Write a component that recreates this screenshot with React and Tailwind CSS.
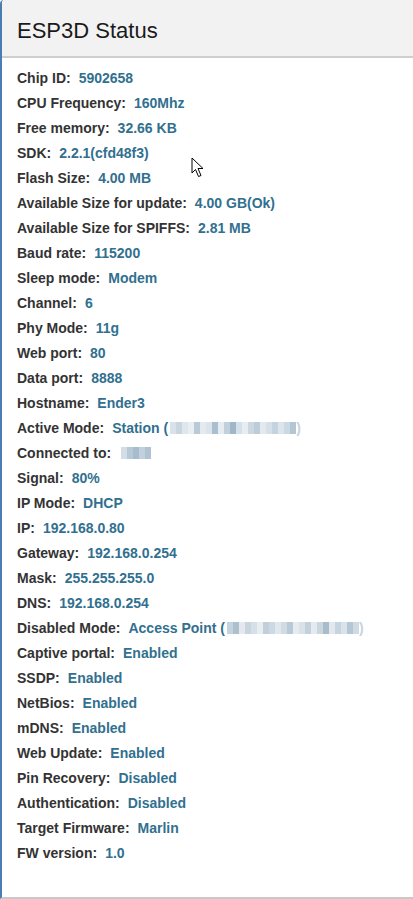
import React from 'react';

const Blur = ({ cells }) => (
  <span className="inline-flex align-middle h-[12px] ml-[2px] mb-[2px] blur-[0.6px]">
    {cells.map((c, i) => (
      <span key={i} className="h-full w-[6px]" style={{ backgroundColor: c }}></span>
    ))}
  </span>
);

const stationCells = ['#d9e2ea', '#c9d6e0', '#dfe7ee', '#e9eef2', '#b9cad7', '#e4eaef', '#dbe4eb', '#a9bfd0', '#e6ecf0', '#c0d0dc', '#9fb7c9', '#d5e0e8', '#e8edf1', '#cbd8e2', '#bccdd9', '#e3e9ee', '#d6e0e8', '#c4d3de', '#dde5ec', '#ccd9e3', '#b3c6d4'];
const apCells = ['#c5d3de', '#aebfcd', '#e3e9ee', '#c8d5df', '#d6e0e8', '#e8edf1', '#bfcfdb', '#ccd9e3', '#e0e7ed', '#d0dbe4', '#b8cad7', '#e5ebef', '#d9e2e9', '#c2d1dc', '#e4eaef', '#cad7e1', '#a9bccc', '#e2e8ed', '#c6d4df', '#dbe3ea', '#b5c7d5', '#cfdae3'];
const connCells = ['#d3dde6', '#b7c8d6', '#a7bccc', '#c1d0dc', '#b0c3d2'];

const rows = [
  ['Chip ID:', '5902658'],
  ['CPU Frequency:', '160Mhz'],
  ['Free memory:', '32.66 KB'],
  ['SDK:', '2.2.1(cfd48f3)'],
  ['Flash Size:', '4.00 MB'],
  ['Available Size for update:', '4.00 GB(Ok)'],
  ['Available Size for SPIFFS:', '2.81 MB'],
  ['Baud rate:', '115200'],
  ['Sleep mode:', 'Modem'],
  ['Channel:', '6'],
  ['Phy Mode:', '11g'],
  ['Web port:', '80'],
  ['Data port:', '8888'],
  ['Hostname:', 'Ender3'],
  ['Active Mode:', <>Station (<Blur cells={stationCells} /><span className="text-[#c5d3de]">)</span></>],
  ['Connected to:', <Blur cells={connCells} />],
  ['Signal:', '80%'],
  ['IP Mode:', 'DHCP'],
  ['IP:', '192.168.0.80'],
  ['Gateway:', '192.168.0.254'],
  ['Mask:', '255.255.255.0'],
  ['DNS:', '192.168.0.254'],
  ['Disabled Mode:', <>Access Point (<Blur cells={apCells} /><span className="text-[#c5d3de]">)</span></>],
  ['Captive portal:', 'Enabled'],
  ['SSDP:', 'Enabled'],
  ['NetBios:', 'Enabled'],
  ['mDNS:', 'Enabled'],
  ['Web Update:', 'Enabled'],
  ['Pin Recovery:', 'Disabled'],
  ['Authentication:', 'Disabled'],
  ['Target Firmware:', 'Marlin'],
  ['FW version:', '1.0'],
];

const Cursor = () => (
  <svg className="absolute left-[189px] top-[157px]" width="14" height="22" viewBox="0 0 14 22">
    <path d="M1 1 L1 16 L4.5 12.5 L7.5 19.5 L10 18.5 L7 11.5 L12 11.5 Z" fill="#fff" stroke="#000" strokeWidth="1" strokeLinejoin="round" />
  </svg>
);

export default function App() {
  return (
    <div className="w-[413px] h-[899px] bg-white" style={{ fontFamily: '"Liberation Sans", Arial, sans-serif' }}>
      <div className="relative h-[899px] flex flex-col border-l-2 border-b-2 border-l-[#4a7db0] border-b-[#c8c8c8] rounded-tl-[4px] overflow-hidden">
        <div className="h-[58px] shrink-0 bg-[#f2f2f2] border-b-2 border-[#cfcfcf] flex items-center px-[15px]">
          <h1 className="text-[22px] text-[#1a1a1a] leading-none pt-[6px]">ESP3D Status</h1>
        </div>
        <div className="pt-[8px] px-[15px]">
          {rows.map(([label, value], i) => (
            <div key={i} className="leading-[25px] text-[14px] font-bold whitespace-nowrap">
              <span className="text-[#333]">{label}</span>
              <span className="ml-[8px] text-[#31708f]">{value}</span>
            </div>
          ))}
        </div>
        <Cursor />
      </div>
    </div>
  );
}
